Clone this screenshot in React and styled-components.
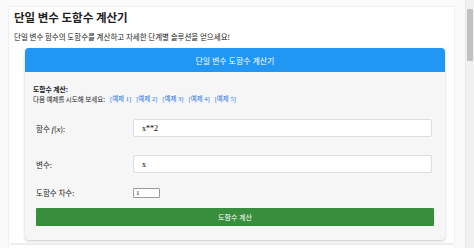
import React, { useState } from 'react'
import styled, { createGlobalStyle } from 'styled-components'

const GlobalStyle = createGlobalStyle`
html, body {
  margin: 0;
  padding: 0;
  background-color: #fafafa;
  font-family: "Noto Sans CJK KR", "Noto Sans", sans-serif;
  color: #222;
}
`

const Page = styled.div`
padding: 7px 20px 0 9px;
display: flex;
flex-direction: column;
gap: 2px;
`

const Panel = styled.div`
background-color: white;
box-shadow: 0 0 2px rgba(0, 0, 0, 0.12);
padding: 0 9px 1px 5px;
min-height: ${props => props.tall ? '300px' : 'auto'};
`

const Title = styled.h1`
font-size: 11.5px;
font-weight: 700;
margin: 0;
line-height: 21px;
`

const Intro = styled.p`
font-size: 7.5px;
margin: 3px 0 0 0;
line-height: 12px;
`

const Card = styled.div`
margin: 5px 0 2px 11px;
border-radius: 4px;
background-color: #f6f6f6;
box-shadow: 0 1px 3px rgba(0, 0, 0, 0.22);
overflow: hidden;
`

const CardHeader = styled.div`
background-color: #2196f3;
color: white;
height: 24px;
display: flex;
align-items: center;
justify-content: center;
font-size: 8px;
`

const CardBody = styled.div`
padding: 12px 11px 14px 8px;
`

const SectionTitle = styled.div`
font-size: 6.8px;
font-weight: 700;
line-height: 10px;
`

const Examples = styled.div`
font-size: 6.5px;
line-height: 10px;
display: flex;
gap: 5px;
`

const ExampleLink = styled.a`
color: #1a73e8;
font-family: "Liberation Serif", "Noto Sans CJK KR", serif;
font-size: 6.5px;
text-decoration: none;
cursor: pointer;
`

const Form = styled.form`
margin: 15px 0 0 3px;
display: flex;
flex-direction: column;
`

const Row = styled.div`
display: grid;
grid-template-columns: 97px 1fr;
align-items: center;
height: ${props => props.h}px;
margin-bottom: ${props => props.mb}px;
`

const Label = styled.label`
font-size: 7.5px;
`

const MathVar = styled.span`
font-family: "Liberation Serif", serif;
font-style: italic;
font-size: 9px;
`

const Input = styled.input`
box-sizing: border-box;
width: 299px;
height: 18px;
border: 1px solid #ddd;
border-radius: 2px;
background-color: white;
padding: 0 8px;
font-family: "Liberation Serif", serif;
font-size: 8px;
outline: none;
`

const SmallInput = styled.input`
box-sizing: border-box;
width: 27px;
height: 10px;
border: 1px solid #999;
border-radius: 1px;
padding: 0 2px;
font-family: "Liberation Serif", serif;
font-size: 7px;
outline: none;
`

const Button = styled.button`
height: 18px;
width: 398px;
border: none;
border-radius: 1px;
background-color: #388e3c;
color: white;
font-family: "Noto Sans CJK KR", sans-serif;
font-size: 7px;
cursor: pointer;
`

const ScrollTrack = styled.div`
position: fixed;
top: 0;
right: 0;
width: 8px;
height: 100vh;
background-color: #f1f1f1;
border-left: 1px solid #e8e8e8;
`

const ScrollThumb = styled.div`
margin: 9px 1px 0 1px;
height: 52px;
border-radius: 1px;
background-color: #c1c1c1;
`

const examples = ['[예제 1]', '[예제 2]', '[예제 3]', '[예제 4]', '[예제 5]']

const App = () => {
    const [expr, setExpr] = useState('x**2')
    const [variable, setVariable] = useState('x')
    const [order, setOrder] = useState('1')

    const submitHandler = (ev) => {
        ev.preventDefault()
    }

    return (
        <>
            <GlobalStyle />
            <Page>
                <Panel>
                    <Title>단일 변수 도함수 계산기</Title>
                    <Intro>단일 변수 함수의 도함수를 계산하고 자세한 단계별 솔루션을 얻으세요!</Intro>
                    <Card>
                        <CardHeader>단일 변수 도함수 계산기</CardHeader>
                        <CardBody>
                            <SectionTitle>도함수 계산:</SectionTitle>
                            <Examples>
                                <span>다음 예제를 시도해 보세요:</span>
                                {examples.map(ex => <ExampleLink key={ex}>{ex}</ExampleLink>)}
                            </Examples>
                            <Form onSubmit={submitHandler}>
                                <Row h={18} mb={18}>
                                    <Label htmlFor="expr">함수 <MathVar>f</MathVar>(<MathVar>x</MathVar>):</Label>
                                    <Input id="expr" value={expr} onChange={ev => setExpr(ev.target.value)} />
                                </Row>
                                <Row h={18} mb={14}>
                                    <Label htmlFor="variable">변수:</Label>
                                    <Input id="variable" value={variable} onChange={ev => setVariable(ev.target.value)} />
                                </Row>
                                <Row h={10} mb={11}>
                                    <Label htmlFor="order">도함수 차수:</Label>
                                    <SmallInput id="order" value={order} onChange={ev => setOrder(ev.target.value)} />
                                </Row>
                                <Button type="submit">도함수 계산</Button>
                            </Form>
                        </CardBody>
                    </Card>
                </Panel>
                <Panel tall />
            </Page>
            <ScrollTrack>
                <ScrollThumb />
            </ScrollTrack>
        </>
    )
}

export default App
